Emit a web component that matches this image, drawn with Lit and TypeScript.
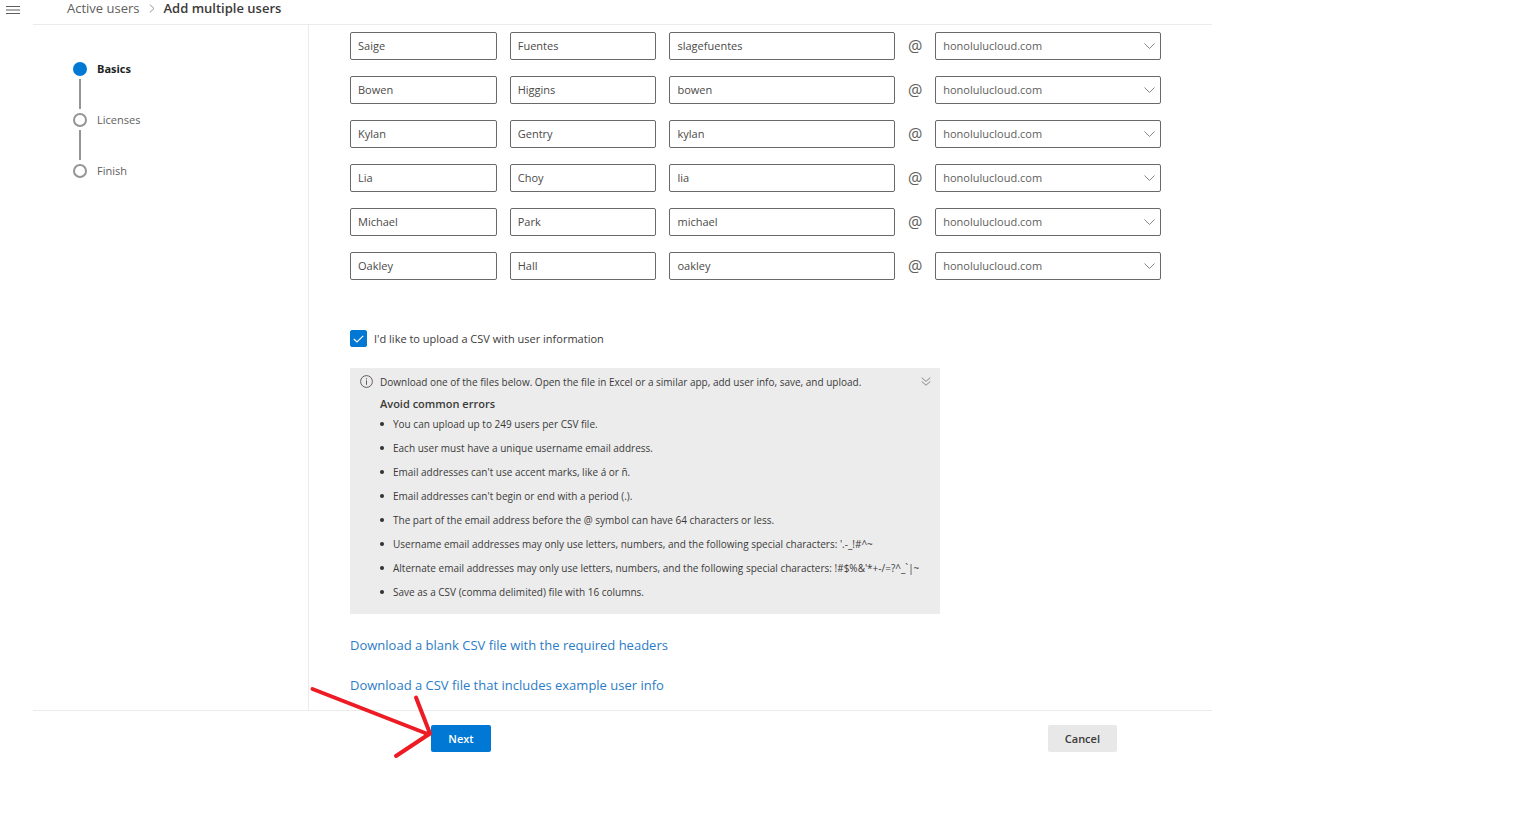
import { LitElement, html, css, svg } from "lit";
import { customElement, state } from "lit/decorators.js";

interface NewUser {
  first: string;
  last: string;
  username: string;
}

const USERS: NewUser[] = [
  { first: "Saige", last: "Fuentes", username: "slagefuentes" },
  { first: "Bowen", last: "Higgins", username: "bowen" },
  { first: "Kylan", last: "Gentry", username: "kylan" },
  { first: "Lia", last: "Choy", username: "lia" },
  { first: "Michael", last: "Park", username: "michael" },
  { first: "Oakley", last: "Hall", username: "oakley" },
];

const RULES = [
  "You can upload up to 249 users per CSV file.",
  "Each user must have a unique username email address.",
  "Email addresses can't use accent marks, like á or ñ.",
  "Email addresses can't begin or end with a period (.).",
  "The part of the email address before the @ symbol can have 64 characters or less.",
  "Username email addresses may only use letters, numbers, and the following special characters: '.-_!#^~",
  "Alternate email addresses may only use letters, numbers, and the following special characters: !#$%&'*+-/=?^_`|~",
  "Save as a CSV (comma delimited) file with 16 columns.",
];

const STEPS = ["Basics", "Licenses", "Finish"];

const chevronDown = svg`<path d="M0.5 0.5 L5.5 5.5 L10.5 0.5" fill="none" stroke="#8a8886" stroke-width="1"/>`;

@customElement("app-root")
export class AppRoot extends LitElement {
  @state() private csv = true;

  static styles = css`
    :host {
      display: block;
      min-height: 100vh;
      background: #fff;
      color: #3b3a39;
      font-family: "Segoe UI", "Open Sans", "Noto Sans", sans-serif;
      font-size: 11px;
      line-height: 16px;
    }
    * {
      box-sizing: border-box;
    }
    button,
    input,
    select {
      font: inherit;
      color: inherit;
      margin: 0;
    }
    .shell {
      display: flex;
      max-width: 1212px;
    }
    .rail {
      flex: none;
      width: 33px;
      padding: 5px 0 0 5px;
    }
    .menu {
      display: block;
      padding: 0;
      border: 0;
      background: none;
      line-height: 0;
    }
    .page {
      flex: 1;
      min-width: 0;
    }
    .crumbs {
      display: flex;
      align-items: center;
      gap: 9px;
      height: 25px;
      padding: 0 34px 8px;
      border-bottom: 1px solid #ebebeb;
      font-size: 13px;
    }
    .crumbs a {
      color: #605e5c;
      text-decoration: none;
    }
    .crumbs strong {
      font-weight: 600;
    }
    .body {
      display: flex;
      border-bottom: 1px solid #ebebeb;
    }
    .side {
      flex: none;
      width: 276px;
      padding: 36px 40px;
      border-right: 1px solid #ebebeb;
    }
    .steps {
      list-style: none;
      margin: 0;
      padding: 0;
    }
    .step {
      display: grid;
      grid-template-columns: 14px auto;
      column-gap: 10px;
      justify-items: start;
      align-items: center;
      color: #605e5c;
    }
    .step.current {
      color: #201f1e;
      font-weight: 700;
    }
    .dot {
      width: 14px;
      height: 14px;
      border: 2px solid #979593;
      border-radius: 50%;
    }
    .current .dot {
      border-color: #0078d4;
      background: #0078d4;
    }
    .line {
      justify-self: center;
      width: 2px;
      height: 30px;
      margin: 2px 0 3px;
      background: #979593;
    }
    .content {
      flex: 1;
      min-width: 0;
      padding: 7px 51px 17px 41px;
    }
    .rows {
      display: grid;
      gap: 16px;
    }
    .row {
      display: grid;
      grid-template-columns: 13fr 13fr 20fr 14px 20fr;
      column-gap: 13px;
      align-items: center;
    }
    .field {
      width: 100%;
      min-width: 0;
      height: 28px;
      padding: 0 7px;
      border: 1px solid #6b6967;
      border-radius: 2px;
      background: #fff;
      color: #4b4a48;
    }
    input.field {
      padding-bottom: 2px;
    }
    .at {
      display: grid;
      justify-content: center;
      font-size: 16px;
      color: #605e5c;
    }
    .picker {
      display: grid;
      align-items: center;
    }
    .picker > * {
      grid-area: 1 / 1;
    }
    .picker select {
      appearance: none;
      color: #605e5c;
    }
    .picker svg {
      justify-self: end;
      margin-right: 6px;
      pointer-events: none;
    }
    .check {
      display: flex;
      align-items: center;
      gap: 7px;
      width: fit-content;
      margin-top: 50px;
    }
    .box {
      display: grid;
      place-items: center;
    }
    .box > * {
      grid-area: 1 / 1;
    }
    .box input {
      appearance: none;
      width: 17px;
      height: 17px;
      border: 1px solid #605e5c;
      border-radius: 2px;
    }
    .box input:checked {
      border-color: #0078d4;
      background: #0078d4;
    }
    .box svg {
      pointer-events: none;
    }
    .info {
      display: grid;
      grid-template-columns: 13px 1fr auto;
      column-gap: 7px;
      max-width: 590px;
      margin-top: 21px;
      padding: 6px 9px 10px 10px;
      background: #ececec;
      font-size: 10px;
    }
    .info p,
    .info h2,
    .info ul {
      margin: 0;
    }
    .info h2,
    .info ul {
      grid-column: 2 / -1;
    }
    .info > svg {
      margin-top: 1px;
    }
    .info h2 {
      margin-top: 6px;
      font-size: 11px;
      font-weight: 600;
    }
    .info ul {
      padding: 0;
      list-style: none;
    }
    .info li {
      display: flex;
      align-items: center;
      gap: 9px;
      line-height: 24px;
    }
    .info li::before {
      content: "";
      flex: none;
      width: 4px;
      height: 4px;
      border-radius: 50%;
      background: #323130;
    }
    .collapse {
      align-self: start;
      padding: 3px 0;
      border: 0;
      background: none;
      line-height: 0;
    }
    .downloads {
      display: grid;
      justify-items: start;
      gap: 24px;
      margin-top: 23px;
      font-size: 13px;
    }
    .downloads a {
      color: #2b7cc7;
      text-decoration: none;
    }
    .actions {
      display: flex;
      justify-content: space-between;
      padding: 14px 95px 0 398px;
    }
    .target {
      position: relative;
    }
    .btn {
      display: block;
      min-width: 60px;
      height: 27px;
      padding: 0 17px;
      border: 0;
      border-radius: 2px;
      background: #e8e8e8;
      font-weight: 600;
    }
    .btn.primary {
      background: #0078d4;
      color: #fff;
    }
    .arrow {
      position: absolute;
      left: -122px;
      top: -39px;
      pointer-events: none;
    }
  `;

  private renderUser(u: NewUser) {
    return html`<div class="row">
      <input class="field" aria-label="First name" .value=${u.first} />
      <input class="field" aria-label="Last name" .value=${u.last} />
      <input class="field" aria-label="Username" .value=${u.username} />
      <span class="at">@</span>
      <div class="picker">
        <select class="field" aria-label="Domain">
          <option>honolulucloud.com</option>
        </select>
        <svg width="11" height="6" viewBox="0 0 11 6" aria-hidden="true">${chevronDown}</svg>
      </div>
    </div>`;
  }

  render() {
    return html`
      <div class="shell">
        <div class="rail">
          <button class="menu" aria-label="Navigation menu">
            <svg width="15" height="10" viewBox="0 0 15 10">
              <path d="M1 1.5H15M1 5H15M1 8.5H15" stroke="#605e5c" stroke-width="1.1" />
            </svg>
          </button>
        </div>
        <div class="page">
          <nav class="crumbs" aria-label="Breadcrumb">
            <a href="#users">Active users</a>
            <svg width="6" height="9" viewBox="0 0 6 9" aria-hidden="true">
              <path d="M0.8 0.5L5 4.5L0.8 8.5" fill="none" stroke="#979593" />
            </svg>
            <strong>Add multiple users</strong>
          </nav>
          <div class="body">
            <aside class="side">
              <ol class="steps">
                ${STEPS.map(
                  (s, i) => html`<li class="step ${i === 0 ? "current" : ""}">
                    <span class="dot"></span><span>${s}</span>
                    ${i < STEPS.length - 1 ? html`<span class="line"></span>` : ""}
                  </li>`
                )}
              </ol>
            </aside>
            <main class="content">
              <div class="rows">${USERS.map((u) => this.renderUser(u))}</div>
              <label class="check">
                <span class="box">
                  <input
                    type="checkbox"
                    .checked=${this.csv}
                    @change=${(e: Event) => (this.csv = (e.target as HTMLInputElement).checked)}
                  />
                  <svg width="11" height="8" viewBox="0 0 11 8" aria-hidden="true">
                    <path d="M0.8 4L4 7L10.2 0.8" fill="none" stroke="#fff" stroke-width="1.2" />
                  </svg>
                </span>
                <span>I'd like to upload a CSV with user information</span>
              </label>
              <section class="info">
                <svg width="13" height="13" viewBox="0 0 13 13" aria-hidden="true">
                  <circle cx="6.5" cy="6.5" r="5.9" fill="none" stroke="#605e5c" />
                  <path d="M6.5 5.4V9.8M6.5 3.2V4.4" stroke="#605e5c" />
                </svg>
                <p>Download one of the files below. Open the file in Excel or a similar app, add user info, save, and upload.</p>
                <button class="collapse" aria-label="Collapse">
                  <svg width="10" height="9" viewBox="0 0 10 9">
                    <path d="M0.7 0.6L5 4.4L9.3 0.6M0.7 4.4L5 8.2L9.3 4.4" fill="none" stroke="#8a8886" />
                  </svg>
                </button>
                <h2>Avoid common errors</h2>
                <ul>
                  ${RULES.map((r) => html`<li>${r}</li>`)}
                </ul>
              </section>
              <div class="downloads">
                <a href="#blank">Download a blank CSV file with the required headers</a>
                <a href="#example">Download a CSV file that includes example user info</a>
              </div>
            </main>
          </div>
          <footer class="actions">
            <div class="target">
              <button class="btn primary">Next</button>
              <svg class="arrow" width="126" height="74" viewBox="0 0 126 74" aria-hidden="true">
                <path
                  d="M3.5 3L120 48.5M107 11.5L121 47.5L87 70"
                  fill="none"
                  stroke="#ed1c24"
                  stroke-width="4"
                  stroke-linecap="round"
                  stroke-linejoin="round"
                />
              </svg>
            </div>
            <button class="btn">Cancel</button>
          </footer>
        </div>
      </div>
    `;
  }
}
